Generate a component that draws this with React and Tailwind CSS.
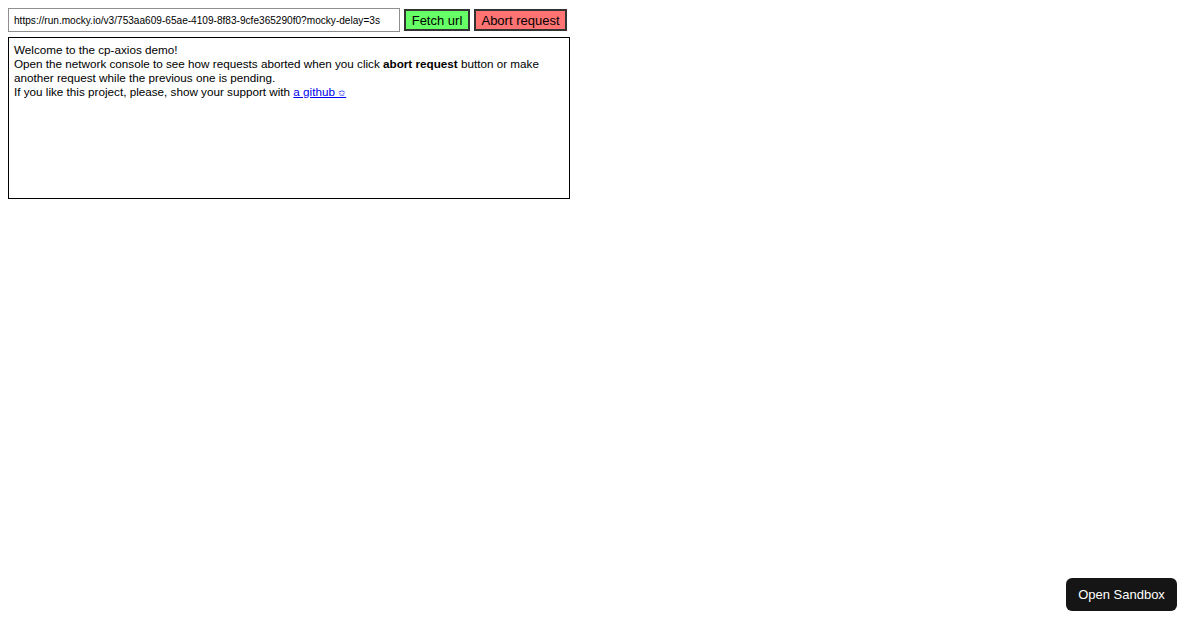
import { useState } from 'react';

const App = () => {
  const [url, setUrl] = useState('https://run.mocky.io/v3/753aa609-65ae-4109-8f83-9cfe365290f0?mocky-delay=3s');

  return (
    <div className="min-h-screen bg-white p-2 text-black" style={{ fontFamily: '"Liberation Sans", Arial, sans-serif' }}>
      {/* Controls */}
      <div className="flex items-start">
        <input
          type="text"
          value={url}
          onChange={(e) => setUrl(e.target.value)}
          className="h-6 w-[392px] border border-[#8f8f8f] bg-white px-[5px] text-[10.1px] text-black outline-none"
        />
        <button className="ml-1 mt-px h-[22px] w-[66px] border-2 border-[#333] bg-[#66ff66] text-[13px] leading-none">
          Fetch url
        </button>
        <button className="ml-1 mt-px h-[22px] w-[93px] border-2 border-[#333] bg-[#ff7373] text-[13px] leading-none">
          Abort request
        </button>
      </div>

      {/* Output */}
      <div className="mt-[5px] h-[162px] w-[562px] border border-black px-[5px] pt-[5px] text-[11.7px] leading-[14px]">
        Welcome to the cp-axios demo!
        <br />
        Open the network console to see how requests aborted when you click <b>abort request</b> button or make another request while the previous one is pending.
        <br />
        If you like this project, please, show your support with{' '}
        <a href="#" className="text-[#0000ee] underline">a github <span className="text-[9px]">✩</span></a>
      </div>

      <button className="fixed bottom-[19px] right-[23px] flex h-[33px] w-[111px] items-center justify-center rounded-md bg-[#151515] text-[13px] text-white">
        Open Sandbox
      </button>
    </div>
  );
};

export default App;
